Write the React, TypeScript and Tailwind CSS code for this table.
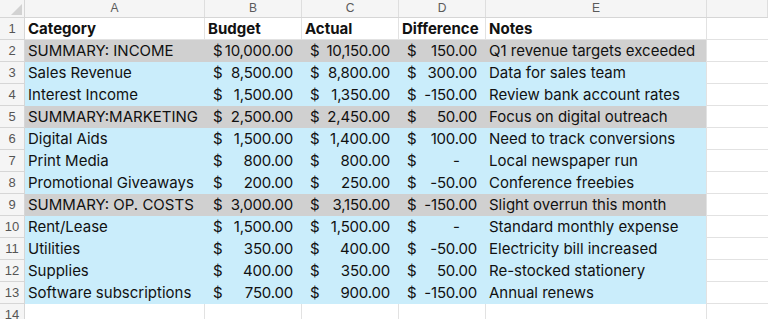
import React from 'react';

type Row = {
  cat: string;
  budget: string;
  actual: string;
  diff: string;
  notes: string;
  fill: 'gray' | 'blue';
};

const rows: Row[] = [
  { cat: 'SUMMARY: INCOME', budget: '10,000.00', actual: '10,150.00', diff: '150.00', notes: 'Q1 revenue targets exceeded', fill: 'gray' },
  { cat: 'Sales Revenue', budget: '8,500.00', actual: '8,800.00', diff: '300.00', notes: 'Data for sales team', fill: 'blue' },
  { cat: 'Interest Income', budget: '1,500.00', actual: '1,350.00', diff: '-150.00', notes: 'Review bank account rates', fill: 'blue' },
  { cat: 'SUMMARY:MARKETING', budget: '2,500.00', actual: '2,450.00', diff: '50.00', notes: 'Focus on digital outreach', fill: 'gray' },
  { cat: 'Digital Aids', budget: '1,500.00', actual: '1,400.00', diff: '100.00', notes: 'Need to track conversions', fill: 'blue' },
  { cat: 'Print Media', budget: '800.00', actual: '800.00', diff: '-', notes: 'Local newspaper run', fill: 'blue' },
  { cat: 'Promotional Giveaways', budget: '200.00', actual: '250.00', diff: '-50.00', notes: 'Conference freebies', fill: 'blue' },
  { cat: 'SUMMARY: OP. COSTS', budget: '3,000.00', actual: '3,150.00', diff: '-150.00', notes: 'Slight overrun this month', fill: 'gray' },
  { cat: 'Rent/Lease', budget: '1,500.00', actual: '1,500.00', diff: '-', notes: 'Standard monthly expense', fill: 'blue' },
  { cat: 'Utilities', budget: '350.00', actual: '400.00', diff: '-50.00', notes: 'Electricity bill increased', fill: 'blue' },
  { cat: 'Supplies', budget: '400.00', actual: '350.00', diff: '50.00', notes: 'Re-stocked stationery', fill: 'blue' },
  { cat: 'Software subscriptions', budget: '750.00', actual: '900.00', diff: '-150.00', notes: 'Annual renews', fill: 'blue' },
];

const cols = [
  { letter: 'A', w: 'w-[180px]' },
  { letter: 'B', w: 'w-[97px]' },
  { letter: 'C', w: 'w-[97px]' },
  { letter: 'D', w: 'w-[87px]' },
  { letter: 'E', w: 'w-[221px]' },
];

const RowNum: React.FC<{ n: number }> = ({ n }) => (
  <div className="w-[25px] shrink-0 border-r border-b border-[#d6d6d6] bg-[#f5f5f5] text-center text-[13px] leading-[22px] text-[#555555]" style={{ fontFamily: '"Liberation Sans", Arial, sans-serif' }}>
    {n}
  </div>
);

const Money: React.FC<{ value: string; w: string; fillCls: string }> = ({ value, w, fillCls }) => (
  <div className={`${w} shrink-0 border-r border-b ${fillCls} flex justify-between gap-[2px] pl-[8px] pr-[8px] whitespace-nowrap`}>
    <span>$</span>
    <span className={value === '-' ? 'pr-[17px]' : 'tracking-[-0.2px]'}>{value}</span>
  </div>
);

export default function App() {
  return (
    <div className="w-[768px] h-[319px] overflow-hidden bg-white text-[#111111] text-[15px] leading-[22px]" style={{ fontFamily: 'Inter, sans-serif' }}>
      {/* column headers */}
      <div className="flex h-[18px] bg-[#f5f5f5] border-b border-[#d6d6d6] text-[12px] leading-[17px] text-[#5a5a5a]" style={{ fontFamily: '"Liberation Sans", Arial, sans-serif' }}>
        <div className="w-[25px] shrink-0 border-r border-[#d6d6d6] relative">
          <svg className="absolute left-[11px] top-[4px]" width="11" height="11" viewBox="0 0 11 11">
            <polygon points="11,0 11,11 0,11" fill="#d2d2d2" />
          </svg>
        </div>
        {cols.map((c) => (
          <div key={c.letter} className={`${c.w} shrink-0 border-r border-[#dedede] text-center`}>
            {c.letter}
          </div>
        ))}
        <div className="flex-1 border-r border-[#dedede]" />
      </div>

      {/* row 1 header */}
      <div className="flex h-[22px]">
        <RowNum n={1} />
        {['Category', 'Budget', 'Actual', 'Difference', 'Notes'].map((t, i) => (
          <div key={t} className={`${cols[i].w} shrink-0 border-r border-b border-[#e2e2e2] pl-[3px] font-bold whitespace-nowrap`}>
            {t}
          </div>
        ))}
        <div className="flex-1 border-b border-[#e2e2e2]" />
      </div>

      {rows.map((r, i) => {
        const fillCls = r.fill === 'gray' ? 'bg-[#d0d0d0] border-[#d0d0d0]' : 'bg-[#caedfb] border-[#caedfb]';
        return (
          <div key={i} className="flex h-[22px]">
            <RowNum n={i + 2} />
            <div className={`${cols[0].w} shrink-0 border-r border-b ${fillCls} pl-[3px] whitespace-nowrap`}>{r.cat}</div>
            <Money value={r.budget} w={cols[1].w} fillCls={fillCls} />
            <Money value={r.actual} w={cols[2].w} fillCls={fillCls} />
            <Money value={r.diff} w={cols[3].w} fillCls={fillCls} />
            <div className={`${cols[4].w} shrink-0 border-r border-b ${fillCls} pl-[3px] whitespace-nowrap`}>{r.notes}</div>
            <div className="flex-1 border-l border-b border-[#e2e2e2] -ml-px" />
          </div>
        );
      })}

      {/* row 14 */}
      <div className="flex h-[22px]">
        <RowNum n={14} />
        {cols.map((c) => (
          <div key={c.letter} className={`${c.w} shrink-0 border-r border-b border-[#e2e2e2]`} />
        ))}
        <div className="flex-1 border-b border-[#e2e2e2]" />
      </div>
    </div>
  );
}
